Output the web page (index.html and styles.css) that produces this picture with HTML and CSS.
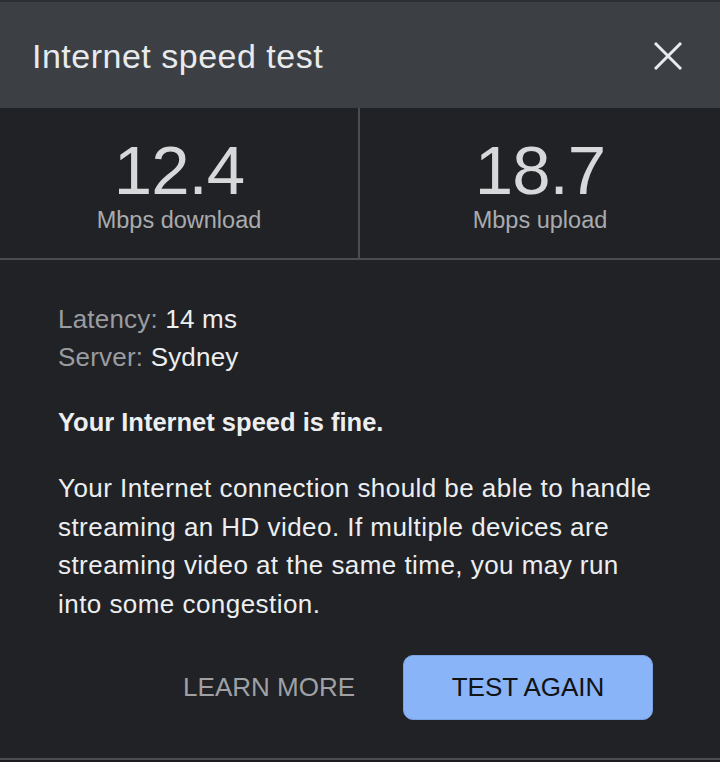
FILE: index.html
```html
<!DOCTYPE html>
<html lang="en">
<head>
    <meta charset="UTF-8">
    <meta name="viewport" content="width=device-width, initial-scale=1.0">
    <title>Internet speed test</title>
    <link rel="stylesheet" href="styles.css">
</head>
<body>
<div class="dialog">
    <div class="header">
        <h1 class="title">Internet speed test</h1>
        <button class="close" aria-label="Close">
            <svg width="28" height="28" viewBox="0 0 28 28">
                <path d="M2 2 L26 26 M26 2 L2 26" stroke="#e8eaed" stroke-width="3" stroke-linecap="square"/>
            </svg>
        </button>
    </div>

    <div class="stats">
        <div class="stat">
            <div class="stat-value">12.4</div>
            <div class="stat-label">Mbps download</div>
        </div>
        <div class="stat">
            <div class="stat-value">18.7</div>
            <div class="stat-label">Mbps upload</div>
        </div>
    </div>

    <div class="content">
        <p class="meta"><span class="meta-key">Latency:</span> 14 ms</p>
        <p class="meta"><span class="meta-key">Server:</span> Sydney</p>

        <p class="verdict">Your Internet speed is fine.</p>

        <p class="desc">Your Internet connection should be able to handle streaming an HD video. If multiple devices are streaming video at the same time, you may run into some congestion.</p>

        <div class="actions">
            <button class="btn btn-text">LEARN MORE</button>
            <button class="btn btn-primary">TEST AGAIN</button>
        </div>
    </div>
</div>
</body>
</html>
```

FILE: styles.css
```css
* {
    margin: 0;
    padding: 0;
    box-sizing: border-box;
    font-family: 'Liberation Sans', Arial, sans-serif;
}
body {
    background: #1c1d20;
    width: 720px;
    height: 762px;
    overflow: hidden;
}
.dialog {
    background: #212226;
    height: 760px;
    border-bottom: 2px solid #4a4c50;
}
/* header */
.header {
    height: 108px;
    background: #3c3f43;
    border-top: 2px solid #2c2e31;
    display: flex;
    align-items: center;
    justify-content: space-between;
    padding: 2px 38px 0 32px;
}
.title {
    font-size: 34px;
    font-weight: normal;
    color: #e8eaed;
    letter-spacing: 0.5px;
}
.close {
    background: none;
    border: none;
    display: flex;
    cursor: pointer;
}
/* speeds */
.stats {
    display: grid;
    grid-template-columns: 1fr 1fr;
    height: 152px;
    border-bottom: 2px solid #4a4c50;
}
.stat {
    display: flex;
    flex-direction: column;
    align-items: center;
    justify-content: center;
    padding-top: 8px;
}
.stat:first-child {
    border-right: 2px solid #4a4c50;
}
.stat-value {
    font-size: 69px;
    line-height: 66px;
    color: #d7d8da;
    letter-spacing: -1px;
}
.stat-label {
    font-size: 23.5px;
    line-height: 32px;
    color: #a9abae;
}
/* text */
.content {
    padding: 40px 58px 0;
}
.meta {
    font-size: 26px;
    line-height: 38px;
    color: #eceef0;
    letter-spacing: 0.2px;
}
.meta-key {
    color: #9a9ca0;
}
.verdict {
    margin-top: 27px;
    font-size: 25.5px;
    line-height: 38px;
    font-weight: bold;
    color: #eceef0;
}
.desc {
    margin-top: 28px;
    font-size: 26px;
    line-height: 38.5px;
    color: #eceef0;
    letter-spacing: 0.45px;
}
.actions {
    margin-top: 32px;
    display: flex;
    align-items: center;
    justify-content: flex-end;
    gap: 48px;
    padding-right: 9px;
}
.btn {
    border: none;
    background: none;
    font-size: 26px;
    cursor: pointer;
}
.btn-text {
    color: #9fa1a5;
}
.btn-primary {
    width: 250px;
    height: 65px;
    border-radius: 10px;
    background: #8ab4f8;
    border: 1px solid #7aa2e0;
    color: #111214;
}
```
